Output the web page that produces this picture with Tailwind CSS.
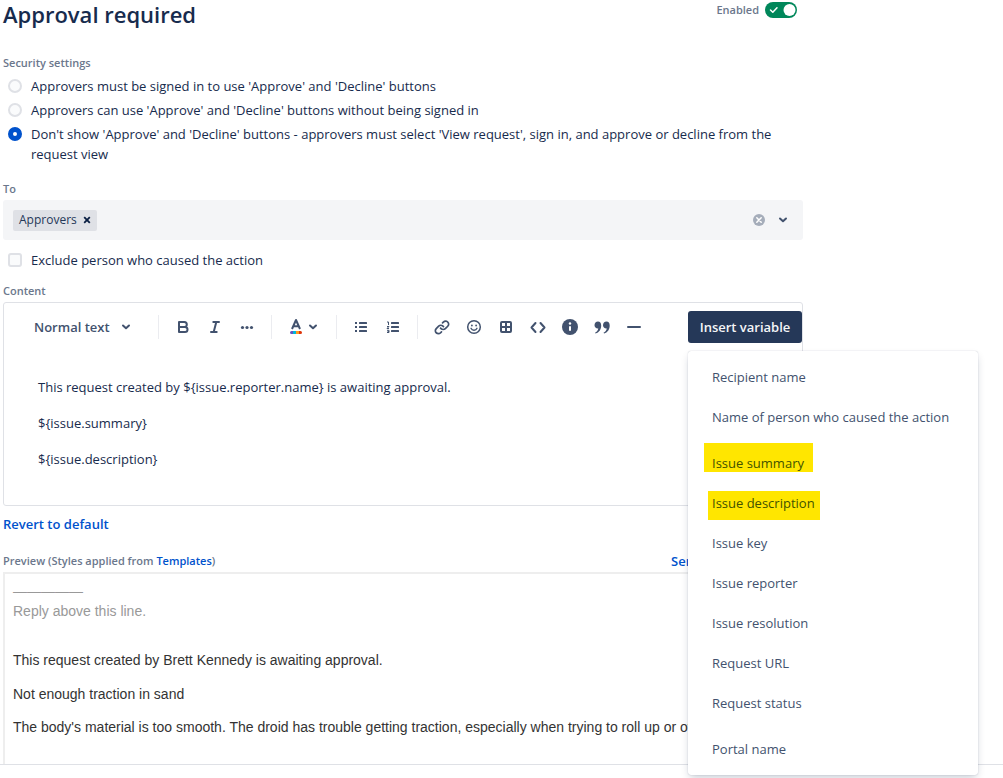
<!DOCTYPE html>
<html lang="en">
<head>
<meta charset="utf-8">
<meta name="viewport" content="width=device-width, initial-scale=1">
<title>Approval required</title>
<script src="https://cdn.jsdelivr.net/npm/@tailwindcss/browser@4"></script>
</head>
<body class="bg-white font-['Open_Sans',sans-serif] text-[13px] leading-5 text-[#172b4d]">
<main class="flex h-screen flex-col overflow-hidden">
<div class="min-h-0 w-full max-w-[803px] grow pl-[3px]">
  <header class="flex items-start justify-between">
    <h1 class="text-[22px] leading-7 font-semibold">Approval required</h1>
    <label class="flex items-center gap-1.5 pt-0.5 pr-1.5 text-[11px] leading-4 font-semibold text-[#6b778c]">Enabled
      <span class="relative flex">
        <input type="checkbox" role="switch" checked class="h-4 w-8 appearance-none rounded-full bg-[#00875a]">
        <svg class="pointer-events-none absolute inset-0" width="32" height="16" viewBox="0 0 32 16" fill="none"><path d="M5.500 8l2.300 2.300 4.200-4.600" stroke="#fff" stroke-width="1.500" stroke-linecap="round" stroke-linejoin="round"/><circle cx="24.500" cy="8" r="6" fill="#fff"/></svg>
      </span>
    </label>
  </header>

  <fieldset class="mt-[27px]">
    <legend class="text-[11px] leading-4 font-semibold text-[#6b778c]">Security settings</legend>
    <div class="mt-[5px] flex flex-col gap-1">
      <label class="flex gap-[9px] pl-[5px]"><input type="radio" name="security" class="mt-[3px] size-3.5 shrink-0 appearance-none rounded-full border-2 border-[#dfe1e6] bg-[#fafbfc] checked:border-[5px] checked:border-[#0052cc] checked:bg-white"><span>Approvers must be signed in to use 'Approve' and 'Decline' buttons</span></label>
      <label class="flex gap-[9px] pl-[5px]"><input type="radio" name="security" class="mt-[3px] size-3.5 shrink-0 appearance-none rounded-full border-2 border-[#dfe1e6] bg-[#fafbfc] checked:border-[5px] checked:border-[#0052cc] checked:bg-white"><span>Approvers can use 'Approve' and 'Decline' buttons without being signed in</span></label>
      <label class="flex gap-[9px] pl-[5px]"><input type="radio" name="security" checked class="mt-[3px] size-3.5 shrink-0 appearance-none rounded-full border-2 border-[#dfe1e6] bg-[#fafbfc] checked:border-[5px] checked:border-[#0052cc] checked:bg-white"><span>Don't show 'Approve' and 'Decline' buttons - approvers must select 'View request', sign in, and approve or decline from the request view</span></label>
    </div>
  </fieldset>

  <label for="to" class="mt-[17px] block text-[11px] leading-4 font-semibold text-[#6b778c]">To</label>
  <div class="mt-[3px] flex h-10 items-center rounded-[3px] bg-[#f4f5f7] pr-3 pl-2.5">
    <span class="flex h-[21px] shrink-0 items-center rounded-xs bg-[#dfe1e6] pl-1.5 text-xs text-[#253858]">Approvers
      <button type="button" aria-label="Remove Approvers" class="flex h-full w-5 items-center justify-center text-[#091e42]"><svg width="8" height="8" viewBox="0 0 8 8"><path d="M1.200 1.200l5.600 5.600M6.800 1.200L1.200 6.800" stroke="currentColor" stroke-width="1.800"/></svg></button>
    </span>
    <input id="to" type="text" role="combobox" aria-expanded="false" class="min-w-0 grow bg-transparent px-1 outline-none">
    <button type="button" aria-label="Clear" class="flex size-6 items-center justify-center"><svg width="12" height="12" viewBox="0 0 12 12"><circle cx="6" cy="6" r="6" fill="#a5adba"/><path d="M3.800 3.800l4.400 4.400M8.200 3.800L3.800 8.200" stroke="#fff" stroke-width="1.500" stroke-linecap="round"/></svg></button>
    <button type="button" aria-label="Open" class="flex h-6 w-5 items-center justify-center pl-1 text-[#42526e]"><svg class="shrink-0" width="10" height="6" viewBox="0 0 10 6" fill="none"><path d="M2 1.500l3 2.800 3-2.800" stroke="currentColor" stroke-width="2" stroke-linecap="round" stroke-linejoin="round"/></svg></button>
  </div>

  <label class="mt-2.5 flex items-center gap-[9px] pl-[5px]"><input type="checkbox" class="size-3.5 appearance-none rounded-[3px] border-2 border-[#dfe1e6] bg-[#fafbfc] checked:bg-[#0052cc]">Exclude person who caused the action</label>

  <div id="content-label" class="mt-[13px] text-[11px] leading-4 font-semibold text-[#6b778c]">Content</div>
  <section class="mt-[3px] rounded-[3px] border border-[#dfe1e6] pt-2 pb-9">
    <div role="toolbar" aria-label="Formatting" class="flex h-8 items-center text-[#42526e]">
      <div class="relative ml-[30px] w-[112px]">
        <select aria-label="Text style" class="block w-full appearance-none text-[13px] leading-5 font-semibold outline-none"><option>Normal text</option><option>Heading 1</option></select>
        <svg class="pointer-events-none absolute top-[7px] right-[15px]" width="10" height="6" viewBox="0 0 10 6" fill="none"><path d="M2 1.500l3 2.800 3-2.800" stroke="currentColor" stroke-width="2" stroke-linecap="round" stroke-linejoin="round"/></svg>
      </div>
      <div class="ml-3 flex h-6 items-center border-l border-[#ebecf0] pl-2">
        <button type="button" aria-label="Bold" class="flex h-8 w-8 items-center justify-center"><svg width="24" height="24" viewBox="0 0 24 24" fill="none" stroke="currentColor" stroke-width="2" stroke-linejoin="round"><path d="M8 7h5.300a2.400 2.400 0 0 1 0 5H8zM8 12h6a2.500 2.500 0 0 1 0 5H8z"/></svg></button>
        <button type="button" aria-label="Italic" class="flex h-8 w-8 items-center justify-center"><svg width="24" height="24" viewBox="0 0 24 24" fill="none" stroke="currentColor" stroke-width="2" stroke-linecap="round"><path d="M10.300 7H16M8 17h5.700M13.300 7l-2.600 10"/></svg></button>
        <button type="button" aria-label="More formatting" class="flex h-8 w-8 items-center justify-center"><svg width="24" height="24" viewBox="0 0 24 24" fill="currentColor"><circle cx="7.500" cy="12.500" r="1.600"/><circle cx="12" cy="12.500" r="1.600"/><circle cx="16.500" cy="12.500" r="1.600"/></svg></button>
      </div>
      <div class="ml-2 flex h-6 items-center border-l border-[#ebecf0] pl-3">
        <button type="button" aria-label="Text colour" class="flex h-8 w-10 items-center">
          <svg width="24" height="24" viewBox="0 0 24 24" fill="none"><path d="M8 14l4-9 4 9M9.500 11.300h5" stroke="currentColor" stroke-width="2" stroke-linejoin="round"/><path d="M7.500 16H9v3H7.500a1.500 1.500 0 0 1 0-3z" fill="#6554c0"/><path d="M9 16h3v3H9z" fill="#00b8d9"/><path d="M12 16h3v3h-3z" fill="#ff991f"/><path d="M15 16h1.500a1.500 1.500 0 0 1 0 3H15z" fill="#de350b"/></svg>
          <svg class="shrink-0" width="10" height="6" viewBox="0 0 10 6" fill="none"><path d="M2 1.500l3 2.800 3-2.800" stroke="currentColor" stroke-width="2" stroke-linecap="round" stroke-linejoin="round"/></svg>
        </button>
      </div>
      <div class="ml-3 flex h-6 items-center border-l border-[#ebecf0] pl-2">
        <button type="button" aria-label="Bullet list" class="flex h-8 w-8 items-center justify-center"><svg width="24" height="24" viewBox="0 0 24 24" fill="currentColor"><path d="M6 7h2v2H6zM6 11h2v2H6zM6 15h2v2H6z"/><rect x="10" y="7" width="8" height="2" rx=".5"/><rect x="10" y="11" width="8" height="2" rx=".5"/><rect x="10" y="15" width="8" height="2" rx=".5"/></svg></button>
        <button type="button" aria-label="Numbered list" class="flex h-8 w-8 items-center justify-center"><svg width="24" height="24" viewBox="0 0 24 24" fill="currentColor"><path d="M6 7h1.500v3M6 11.500h2L6 13.500h2M6 15.300h2v2.200H6M6.500 16.400H8" fill="none" stroke="currentColor"/><rect x="10" y="7" width="8" height="2" rx=".5"/><rect x="10" y="11" width="8" height="2" rx=".5"/><rect x="10" y="15" width="8" height="2" rx=".5"/></svg></button>
      </div>
      <div class="ml-2 flex h-6 items-center border-l border-[#ebecf0] pl-2">
        <button type="button" aria-label="Link" class="flex h-8 w-8 items-center justify-center"><svg width="20" height="20" viewBox="0 0 24 24" fill="currentColor"><path d="M12.856 5.457l-.937.920a1.002 1.002 0 0 0 0 1.437 1.047 1.047 0 0 0 1.463 0l.984-.966c.967-.950 2.542-1.135 3.602-.288a2.540 2.540 0 0 1 .203 3.810l-2.903 2.852a2.646 2.646 0 0 1-3.696 0l-1.110-1.090L9 13.570l1.108 1.089c1.822 1.788 4.802 1.788 6.622 0l2.905-2.852a4.558 4.558 0 0 0-.357-6.820c-1.893-1.517-4.695-1.226-6.422.470"/><path d="M11.144 19.543l.937-.920a1.002 1.002 0 0 0 0-1.437 1.047 1.047 0 0 0-1.462 0l-.985.966c-.967.950-2.542 1.135-3.602.288a2.540 2.540 0 0 1-.203-3.810l2.903-2.852a2.646 2.646 0 0 1 3.696 0l1.110 1.090L15 11.430l-1.108-1.089c-1.822-1.788-4.802-1.788-6.622 0l-2.905 2.852a4.558 4.558 0 0 0 .357 6.820c1.893 1.517 4.695 1.226 6.422-.470"/></svg></button>
        <button type="button" aria-label="Emoji" class="flex h-8 w-8 items-center justify-center"><svg width="24" height="24" viewBox="0 0 24 24" fill="none" stroke="currentColor"><circle cx="12" cy="12" r="6.300" stroke-width="1.500"/><path d="M9 13.300c.600 1.300 1.600 2 3 2s2.400-.700 3-2" stroke-width="1.400" stroke-linecap="round"/><circle cx="9.900" cy="10.500" r=".9" fill="currentColor" stroke="none"/><circle cx="14.100" cy="10.500" r=".9" fill="currentColor" stroke="none"/></svg></button>
        <button type="button" aria-label="Table" class="flex h-8 w-8 items-center justify-center"><svg width="24" height="24" viewBox="0 0 24 24" fill="none" stroke="currentColor" stroke-width="2"><rect x="7" y="7" width="10" height="10" rx="1"/><path d="M12 7v10M7 12h10"/></svg></button>
        <button type="button" aria-label="Code" class="flex h-8 w-8 items-center justify-center"><svg width="24" height="24" viewBox="0 0 24 24" fill="none" stroke="currentColor" stroke-width="2" stroke-linecap="round" stroke-linejoin="round"><path d="M9.500 8l-4 4.500 4 4.500M14.500 8l4 4.500-4 4.500"/></svg></button>
        <button type="button" aria-label="Info panel" class="flex h-8 w-8 items-center justify-center"><svg width="24" height="24" viewBox="0 0 24 24"><circle cx="12" cy="12" r="8" fill="currentColor"/><circle cx="12" cy="8.500" r="1.200" fill="#fff"/><rect x="11" y="11" width="2" height="5" rx="1" fill="#fff"/></svg></button>
        <button type="button" aria-label="Quote" class="flex h-8 w-8 items-center justify-center"><svg width="24" height="24" viewBox="0 0 24 24" fill="currentColor"><path d="M8 6.500c2 0 3.200 1.500 3.200 4 0 4-2.200 7-5.600 8l-.6-.8c1.800-1 3-2.400 3.300-4.300-2.200.2-3.800-1.200-3.800-3.200 0-2.100 1.400-3.700 3.500-3.700zM16.500 6.500c2 0 3.200 1.500 3.200 4 0 4-2.200 7-5.600 8l-.6-.8c1.800-1 3-2.400 3.300-4.300-2.200.2-3.800-1.200-3.800-3.200 0-2.100 1.400-3.700 3.500-3.700z"/></svg></button>
        <button type="button" aria-label="Divider" class="flex h-8 w-8 items-center justify-center"><svg width="24" height="24" viewBox="0 0 24 24"><rect x="5" y="11" width="14" height="2" rx="1" fill="currentColor"/></svg></button>
      </div>
      <div class="relative ml-auto w-[114px] shrink-0">
        <button type="button" aria-haspopup="menu" aria-expanded="true" class="block h-8 w-full rounded-[3px] bg-[#253858] text-center font-semibold whitespace-nowrap text-[#f4f5f7]">Insert variable</button>
        <div role="menu" class="absolute top-10 left-0 z-10 flex w-[290px] flex-col gap-1.5 rounded-[3px] bg-white py-1.5 text-[#42526e] shadow-[0_4px_8px_-2px_rgba(9,30,66,0.25),0_0_1px_rgba(9,30,66,0.31)]">
          <div class="flex flex-col">
            <button type="button" role="menuitem" class="h-10 px-6 text-left whitespace-nowrap">Recipient name</button>
            <button type="button" role="menuitem" class="h-10 px-6 text-left whitespace-nowrap">Name of person who caused the action</button>
          </div>
          <div class="flex flex-col">
            <button type="button" role="menuitem" class="flex h-10 items-start px-4 text-left text-[#425200]"><span class="h-[29px] w-[109px] bg-[#ffe600] pt-2.5 pl-2 leading-5 whitespace-nowrap">Issue summary</span></button>
            <button type="button" role="menuitem" class="flex h-10 items-start px-5 pt-2 text-left text-[#425200]"><span class="h-[29px] w-[112px] bg-[#ffe600] pt-0.5 pl-1 leading-5 whitespace-nowrap">Issue description</span></button>
            <button type="button" role="menuitem" class="h-10 px-6 text-left">Issue key</button>
            <button type="button" role="menuitem" class="h-10 px-6 text-left">Issue reporter</button>
            <button type="button" role="menuitem" class="h-10 px-6 text-left">Issue resolution</button>
            <button type="button" role="menuitem" class="h-10 px-6 text-left">Request URL</button>
            <button type="button" role="menuitem" class="h-10 px-6 text-left">Request status</button>
          </div>
          <button type="button" role="menuitem" class="h-10 px-6 text-left">Portal name</button>
        </div>
      </div>
    </div>
    <div role="textbox" aria-multiline="true" aria-labelledby="content-label" contenteditable="true" class="mt-[34px] flex flex-col gap-4 px-[34px] outline-none">
      <p>This request created by ${issue.reporter.name} is awaiting approval.</p>
      <p>${issue.summary}</p>
      <p>${issue.description}</p>
    </div>
  </section>

  <a href="#" class="mt-2 block w-fit font-semibold text-[#0052cc]">Revert to default</a>

  <div class="mt-[19px] flex items-center justify-between text-[11px] leading-4 font-semibold">
    <span class="text-[#6b778c]">Preview (Styles applied from <a href="#" class="text-[#0052cc]">Templates</a>)</span>
    <a href="#" class="w-[132px] text-[13px] leading-4 whitespace-nowrap text-[#0052cc]">Send test email</a>
  </div>
  <div class="mt-[3px] h-60 border-2 border-[#eeeeee] px-2 pt-[7px] font-['Liberation_Sans',Arial,sans-serif] text-sm leading-5 text-[#333]">
    <p class="text-[#999]">—————<br>Reply above this line.</p>
    <p class="mt-[29px]">This request created by Brett Kennedy is awaiting approval.</p>
    <p class="mt-3.5">Not enough traction in sand</p>
    <p class="mt-[13px]">The body's material is too smooth. The droid has trouble getting traction, especially when trying to roll up or over slopes.</p>
  </div>
</div>
<footer class="h-3.5 shrink-0 border-t border-[#dfe1e6] bg-white"></footer>
</main>
</body>
</html>
